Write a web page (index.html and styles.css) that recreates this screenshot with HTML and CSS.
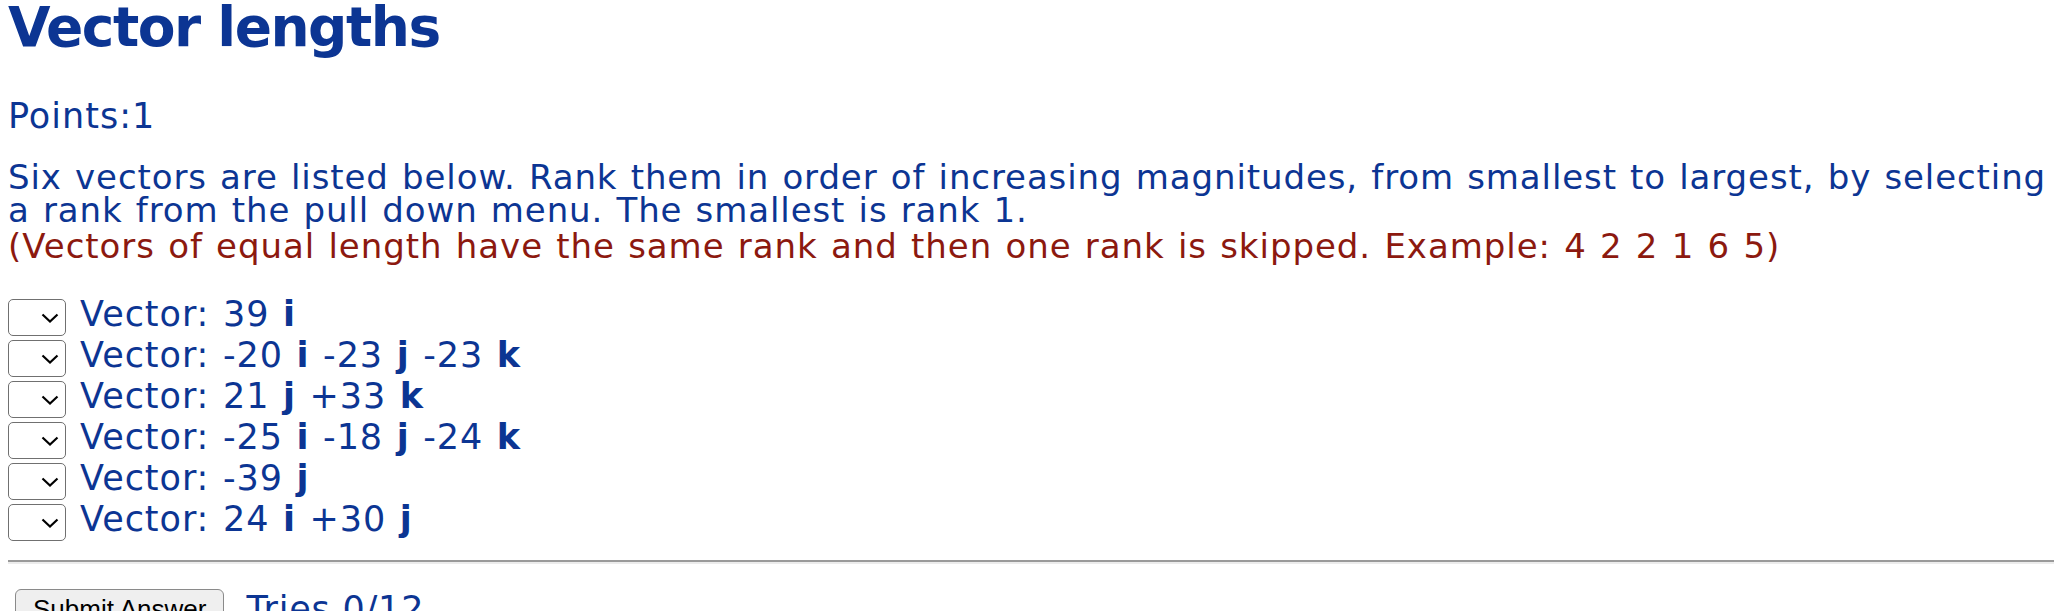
FILE: index.html
```html
<!DOCTYPE html>
<html lang="en">

<head>
    <meta charset="UTF-8">
    <title>Vector lengths</title>
    <link rel="stylesheet" href="styles.css">
</head>

<body>
    <h1 class="title">Vector lengths</h1>
    <div class="points">Points:1</div>
    <div class="prompt">Six vectors are listed below. Rank them in order of increasing magnitudes, from smallest to largest, by selecting a rank from the pull down menu. The smallest is rank 1.</div>
    <div class="note">(Vectors of equal length have the same rank and then one rank is skipped. Example: 4 2 2 1 6 5)</div>

    <div class="vectors">
        <div class="row">
            <span class="pick">
                <select><option></option><option>1</option><option>2</option><option>3</option><option>4</option><option>5</option><option>6</option></select>
                <svg class="chev" viewBox="0 0 18 10"><path d="M1.5 1.5 L9 8.5 L16.5 1.5" /></svg>
            </span>
            <span class="vec">Vector: 39 <b>i</b></span>
        </div>
        <div class="row">
            <span class="pick">
                <select><option></option><option>1</option><option>2</option><option>3</option><option>4</option><option>5</option><option>6</option></select>
                <svg class="chev" viewBox="0 0 18 10"><path d="M1.5 1.5 L9 8.5 L16.5 1.5" /></svg>
            </span>
            <span class="vec">Vector: -20 <b>i</b> -23 <b>j</b> -23 <b>k</b></span>
        </div>
        <div class="row">
            <span class="pick">
                <select><option></option><option>1</option><option>2</option><option>3</option><option>4</option><option>5</option><option>6</option></select>
                <svg class="chev" viewBox="0 0 18 10"><path d="M1.5 1.5 L9 8.5 L16.5 1.5" /></svg>
            </span>
            <span class="vec">Vector: 21 <b>j</b> +33 <b>k</b></span>
        </div>
        <div class="row">
            <span class="pick">
                <select><option></option><option>1</option><option>2</option><option>3</option><option>4</option><option>5</option><option>6</option></select>
                <svg class="chev" viewBox="0 0 18 10"><path d="M1.5 1.5 L9 8.5 L16.5 1.5" /></svg>
            </span>
            <span class="vec">Vector: -25 <b>i</b> -18 <b>j</b> -24 <b>k</b></span>
        </div>
        <div class="row">
            <span class="pick">
                <select><option></option><option>1</option><option>2</option><option>3</option><option>4</option><option>5</option><option>6</option></select>
                <svg class="chev" viewBox="0 0 18 10"><path d="M1.5 1.5 L9 8.5 L16.5 1.5" /></svg>
            </span>
            <span class="vec">Vector: -39 <b>j</b></span>
        </div>
        <div class="row">
            <span class="pick">
                <select><option></option><option>1</option><option>2</option><option>3</option><option>4</option><option>5</option><option>6</option></select>
                <svg class="chev" viewBox="0 0 18 10"><path d="M1.5 1.5 L9 8.5 L16.5 1.5" /></svg>
            </span>
            <span class="vec">Vector: 24 <b>i</b> +30 <b>j</b></span>
        </div>
    </div>

    <hr class="rule">

    <div class="actions">
        <button class="submit">Submit Answer</button>
        <span class="tries">Tries 0/12</span>
    </div>
</body>

</html>
```

FILE: styles.css
```css
body {
    margin: 0 8px;
    font-family: "DejaVu Sans", Verdana, sans-serif;
    color: #0c3593;
    background: #fff;
}

.title {
    margin: 0 0 40px 0;
    font-size: 55px;
    line-height: 55px;
    letter-spacing: -1.5px;
    font-weight: bold;
}

.points {
    font-size: 35px;
    line-height: 42px;
    letter-spacing: 1px;
    margin-bottom: 24px;
}

.prompt {
    font-size: 34px;
    line-height: 33px;
    letter-spacing: 0.9px;
    word-spacing: 1.5px;
}

.note {
    font-size: 34px;
    line-height: 38px;
    letter-spacing: 0.95px;
    word-spacing: 1.5px;
    color: #8c190f;
}

.vectors {
    margin-top: 32px;
}

.row {
    display: flex;
    align-items: flex-start;
    height: 41px;
}

.pick {
    position: relative;
    margin-top: 2px;
    margin-right: 14px;
    width: 58px;
    height: 37px;
}

.pick select {
    appearance: none;
    -webkit-appearance: none;
    width: 58px;
    height: 37px;
    margin: 0;
    border: 1.5px solid #707070;
    border-radius: 5px;
    background: #fff;
    color: #000;
}

.chev {
    position: absolute;
    left: 33px;
    top: 14px;
    width: 18px;
    height: 10px;
    pointer-events: none;
}

.chev path {
    fill: none;
    stroke: #000;
    stroke-width: 2.2;
}

.vec {
    font-size: 35px;
    line-height: 35px;
    letter-spacing: 0.95px;
    word-spacing: 1.5px;
    white-space: pre;
}

.vec b {
    font-weight: bold;
}

.rule {
    margin: 17px 0 0 0;
    height: 0;
    border: 0;
    border-top: 2px solid #9a9a9a;
    border-bottom: 2px solid #ececec;
}

.actions {
    display: flex;
    align-items: flex-start;
    margin-top: 25px;
}

.submit {
    margin: 0 22px 0 7px;
    padding: 4px 17px;
    font-family: "Liberation Sans", Arial, sans-serif;
    font-size: 26px;
    line-height: 30px;
    color: #000;
    background: #efefef;
    border: 1px solid #8a8a8a;
    border-radius: 6px;
}

.tries {
    margin-top: 3px;
    font-size: 35px;
    line-height: 35px;
    letter-spacing: 0.8px;
}
```
